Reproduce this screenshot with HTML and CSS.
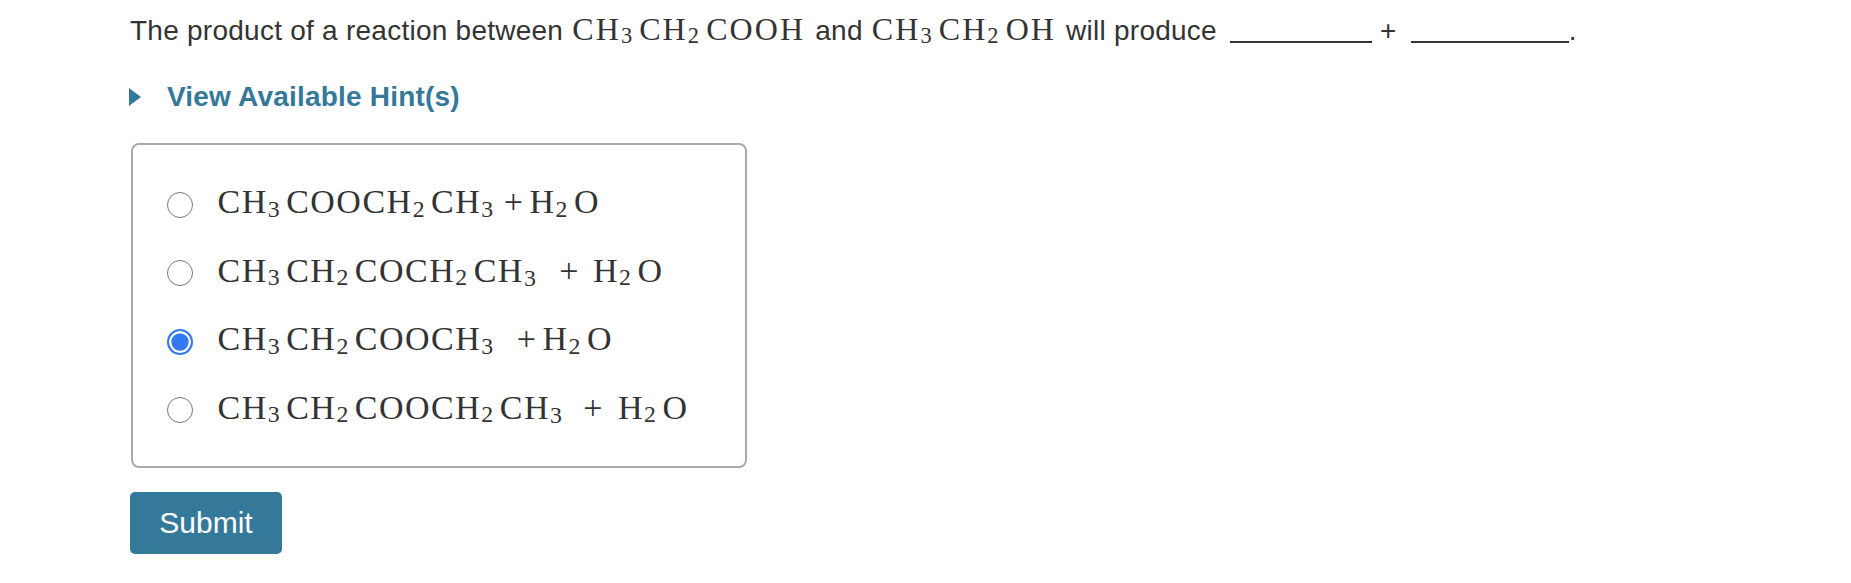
FILE: index.html
```html
<!DOCTYPE html>
<html lang="en">
<head>
<meta charset="utf-8">
<title>Question</title>
<link rel="stylesheet" href="styles.css">
</head>
<body>
<main class="page">
  <p class="prompt">The product of a reaction between <span class="chem line">CH<sub class="s">3</sub>CH<sub class="s">2</sub>COOH</span> and <span class="chem line">CH<sub class="s">3</sub>CH<sub class="s">2</sub>OH</span> will produce <span class="blank blank-a"></span> + <span class="blank blank-b"></span>.</p>

  <div class="hint">
    <span class="caret"></span>
    <span class="hint-text">View Available Hint(s)</span>
  </div>

  <div class="choices">
    <label class="option">
      <input type="radio" name="ans" class="radio">
      <span class="chem opt">CH<sub class="s">3</sub>COOCH<sub class="s">2</sub>CH<sub class="s last">3</sub><span class="op op-1">+</span>H<sub class="s">2</sub>O</span>
    </label>
    <label class="option">
      <input type="radio" name="ans" class="radio">
      <span class="chem opt">CH<sub class="s">3</sub>CH<sub class="s">2</sub>COCH<sub class="s">2</sub>CH<sub class="s last">3</sub><span class="op op-2">+</span>H<sub class="s">2</sub>O</span>
    </label>
    <label class="option">
      <input type="radio" name="ans" class="radio" checked>
      <span class="chem opt">CH<sub class="s">3</sub>CH<sub class="s">2</sub>COOCH<sub class="s last">3</sub><span class="op op-3">+</span>H<sub class="s">2</sub>O</span>
    </label>
    <label class="option">
      <input type="radio" name="ans" class="radio">
      <span class="chem opt">CH<sub class="s">3</sub>CH<sub class="s">2</sub>COOCH<sub class="s">2</sub>CH<sub class="s last">3</sub><span class="op op-4">+</span>H<sub class="s">2</sub>O</span>
    </label>
  </div>

  <button class="submit" type="button">Submit</button>
</main>
</body>
</html>
```

FILE: styles.css
```css
html, body {
  margin: 0;
  padding: 0;
  background: #ffffff;
}

.page {
  padding-left: 130px;
  font-family: "Liberation Sans", Arial, Helvetica, sans-serif;
  font-size: 28px;
  color: #333333;
}

.prompt {
  margin: 0;
  padding-top: 9px;
  line-height: 40px;
  letter-spacing: 0.25px;
  white-space: nowrap;
}

.chem {
  font-family: "Liberation Serif", "Times New Roman", serif;
  letter-spacing: 1.5px;
  color: #333333;
}

.chem.line {
  font-size: 32px;
  letter-spacing: 2.1px;
  margin: 0 2px 0 1px;
}

.chem.opt {
  font-size: 34px;
  line-height: 1;
  white-space: nowrap;
}

.s {
  font-size: 70%;
  line-height: 0;
  vertical-align: -0.15em;
  margin-right: 5px;
}

.s.last {
  margin-right: 0;
}

.blank {
  display: inline-block;
  height: 0;
  border-bottom: 2px solid #333333;
  vertical-align: -3px;
}

.blank-a {
  width: 142px;
  margin-left: 5px;
}

.blank-b {
  width: 158px;
  margin-left: 6px;
}

.hint {
  display: flex;
  align-items: center;
  height: 28px;
  margin-top: 32px;
  color: #35799a;
}

.caret {
  width: 0;
  height: 0;
  margin-left: -1px;
  margin-right: 26px;
  border-left: 12px solid #35799a;
  border-top: 9px solid transparent;
  border-bottom: 9px solid transparent;
}

.hint-text {
  font-weight: bold;
  line-height: 1;
  letter-spacing: 0.2px;
}

.choices {
  width: 612px;
  margin: 32px 0 0 1px;
  padding: 23px 0 24px 0;
  border: 2px solid #aaaaaa;
  border-radius: 8px;
}

.option {
  display: flex;
  align-items: center;
  height: 68.5px;
  padding-left: 33.5px;
}

.radio {
  appearance: none;
  -webkit-appearance: none;
  flex: none;
  width: 26px;
  height: 26px;
  margin: 5px 25px 0 0;
  border: 1.6px solid #777777;
  border-radius: 50%;
  background: #ffffff;
  box-sizing: border-box;
}

.radio:checked {
  border: 2px solid #3478f6;
  background: #3478f6;
  box-shadow: inset 0 0 0 2.3px #ffffff;
}

.op {
  display: inline-block;
}

.op-1 { margin: 0 5px 0 9px; }
.op-2 { margin: 0 13px 0 22px; }
.op-3 { margin: 0 5px 0 22px; }
.op-4 { margin: 0 14px 0 20px; }

.submit {
  display: block;
  width: 152px;
  height: 62px;
  margin-top: 24px;
  padding: 0;
  border: none;
  border-radius: 5px;
  background: #35799a;
  color: #ffffff;
  font-family: "Liberation Sans", Arial, Helvetica, sans-serif;
  font-size: 30px;
  line-height: 62px;
}
```
